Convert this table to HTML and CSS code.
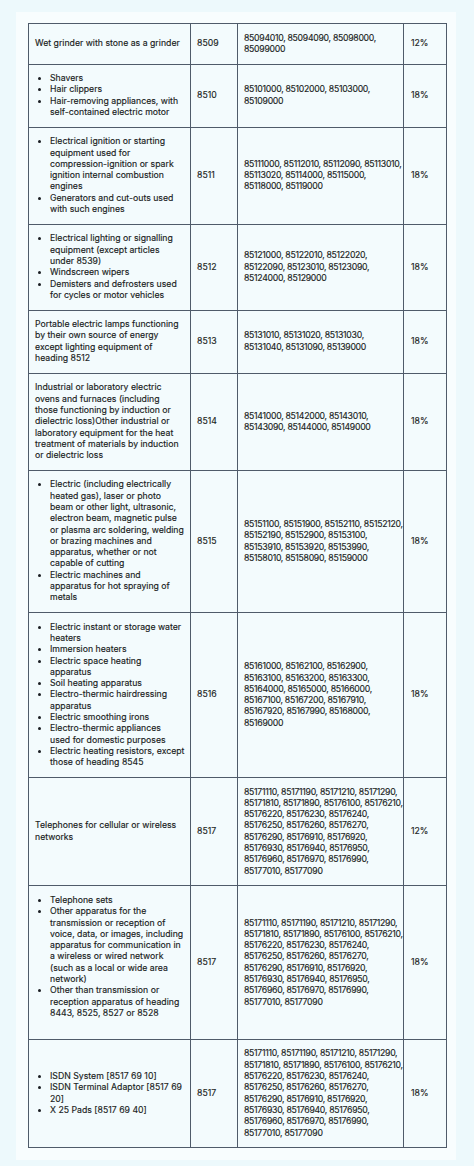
FILE: index.html
```html
<!DOCTYPE html>
<html lang="en">
<head>
<meta charset="utf-8">
<title>GST rates - Chapter 85</title>
<link rel="stylesheet" href="styles.css">
</head>
<body>
<div class="card">
<table class="rates">
<colgroup><col class="c-desc"><col class="c-head"><col class="c-hsn"><col class="c-rate"></colgroup>
<tbody>
<tr>
<td>Wet grinder with stone as a grinder</td>
<td>8509</td>
<td class="hsn">85094010, 85094090, 85098000,<br>85099000</td>
<td class="rate">12%</td>
</tr>
<tr>
<td><ul class="items"><li>Shavers</li><li>Hair clippers</li><li>Hair-removing appliances, with self-contained electric motor</li></ul></td>
<td>8510</td>
<td class="hsn">85101000, 85102000, 85103000,<br>85109000</td>
<td class="rate">18%</td>
</tr>
<tr>
<td><ul class="items"><li>Electrical ignition or starting equipment used for compression-ignition or spark ignition internal combustion engines</li><li>Generators and cut-outs used with such engines</li></ul></td>
<td>8511</td>
<td class="hsn">85111000, 85112010, 85112090, 85113010,<br>85113020, 85114000, 85115000,<br>85118000, 85119000</td>
<td class="rate">18%</td>
</tr>
<tr>
<td><ul class="items"><li>Electrical lighting or signalling equipment (except articles under 8539)</li><li>Windscreen wipers</li><li>Demisters and defrosters used for cycles or motor vehicles</li></ul></td>
<td>8512</td>
<td class="hsn">85121000, 85122010, 85122020,<br>85122090, 85123010, 85123090,<br>85124000, 85129000</td>
<td class="rate">18%</td>
</tr>
<tr>
<td>Portable electric lamps functioning by their own source of energy except lighting equipment of heading 8512</td>
<td>8513</td>
<td class="hsn">85131010, 85131020, 85131030,<br>85131040, 85131090, 85139000</td>
<td class="rate">18%</td>
</tr>
<tr>
<td>Industrial or laboratory electric ovens and furnaces (including those functioning by induction or dielectric loss)Other industrial or laboratory equipment for the heat treatment of materials by induction or dielectric loss</td>
<td>8514</td>
<td class="hsn">85141000, 85142000, 85143010,<br>85143090, 85144000, 85149000</td>
<td class="rate">18%</td>
</tr>
<tr>
<td><ul class="items"><li>Electric (including electrically heated gas), laser or photo beam or other light, ultrasonic, electron beam, magnetic pulse or plasma arc soldering, welding or brazing machines and apparatus, whether or not capable of cutting</li><li>Electric machines and apparatus for hot spraying of metals</li></ul></td>
<td>8515</td>
<td class="hsn">85151100, 85151900, 85152110, 85152120,<br>85152190, 85152900, 85153100,<br>85153910, 85153920, 85153990,<br>85158010, 85158090, 85159000</td>
<td class="rate">18%</td>
</tr>
<tr>
<td><ul class="items"><li>Electric instant or storage water heaters</li><li>Immersion heaters</li><li>Electric space heating apparatus</li><li>Soil heating apparatus</li><li>Electro-thermic hairdressing apparatus</li><li>Electric smoothing irons</li><li>Electro-thermic appliances<br>used for domestic purposes</li><li><span class="keep">Electric heating resistors, except</span> those of heading 8545</li></ul></td>
<td>8516</td>
<td class="hsn">85161000, 85162100, 85162900,<br>85163100, 85163200, 85163300,<br>85164000, 85165000, 85166000,<br>85167100, 85167200, 85167910,<br>85167920, 85167990, 85168000,<br>85169000</td>
<td class="rate">18%</td>
</tr>
<tr>
<td>Telephones for cellular or wireless networks</td>
<td>8517</td>
<td class="hsn">85171110, 85171190, 85171210, 85171290,<br>85171810, 85171890, 85176100, 85176210,<br>85176220, 85176230, 85176240,<br>85176250, 85176260, 85176270,<br>85176290, 85176910, 85176920,<br>85176930, 85176940, 85176950,<br>85176960, 85176970, 85176990,<br>85177010, 85177090</td>
<td class="rate">12%</td>
</tr>
<tr>
<td><ul class="items items-trail"><li>Telephone sets</li><li>Other apparatus for the transmission or reception of voice, data, or images, including apparatus for communication in a wireless or wired network (such as a local or wide area network)</li><li>Other than transmission or reception apparatus of heading 8443, 8525, 8527 or 8528</li></ul></td>
<td>8517</td>
<td class="hsn">85171110, 85171190, 85171210, 85171290,<br>85171810, 85171890, 85176100, 85176210,<br>85176220, 85176230, 85176240,<br>85176250, 85176260, 85176270,<br>85176290, 85176910, 85176920,<br>85176930, 85176940, 85176950,<br>85176960, 85176970, 85176990,<br>85177010, 85177090</td>
<td class="rate">18%</td>
</tr>
<tr>
<td><ul class="items"><li>ISDN System [8517 69 10]</li><li>ISDN Terminal Adaptor [8517 69 20]</li><li>X 25 Pads [8517 69 40]</li></ul></td>
<td>8517</td>
<td class="hsn">85171110, 85171190, 85171210, 85171290,<br>85171810, 85171890, 85176100, 85176210,<br>85176220, 85176230, 85176240,<br>85176250, 85176260, 85176270,<br>85176290, 85176910, 85176920,<br>85176930, 85176940, 85176950,<br>85176960, 85176970, 85176990,<br>85177010, 85177090</td>
<td class="rate">18%</td>
</tr>
</tbody>
</table>
</div>
</body>
</html>
```
FILE: styles.css
```css
html, body {
  margin: 0;
  padding: 0;
  background: #edf9fc;
}
body {
  font-family: "Inter", "Liberation Sans", sans-serif;
  color: #1a1d22;
  overflow: hidden;
}
.card {
  width: 418px;
  margin: 12px 0 0 16px;
  padding: 11px 10px 12px 12px;
  background: #f8fdfe;
}
.rates {
  width: 418px;
  border-collapse: collapse;
  table-layout: fixed;
  background: #f3fbfd;
  font-size: 8.73px;
  line-height: 11.3px;
  -webkit-text-stroke: 0.15px currentColor;
}
.c-desc { width: 162px; }
.c-head { width: 47px; }
.c-hsn { width: 166px; }
.c-rate { width: 43px; }
.rates td {
  border: 1px solid #4f5b6a;
  padding: 8.5px 6px;
  vertical-align: middle;
  text-align: left;
}
.rates td.hsn {
  white-space: nowrap;
  letter-spacing: -0.3px;
  padding-right: 2px;
}
.rates td.rate {
  padding-left: 7px;
}
.items {
  margin: 0;
  padding-left: 15px;
}
.items-trail {
  margin-bottom: 11.3px;
}
.keep {
  white-space: nowrap;
}
```
